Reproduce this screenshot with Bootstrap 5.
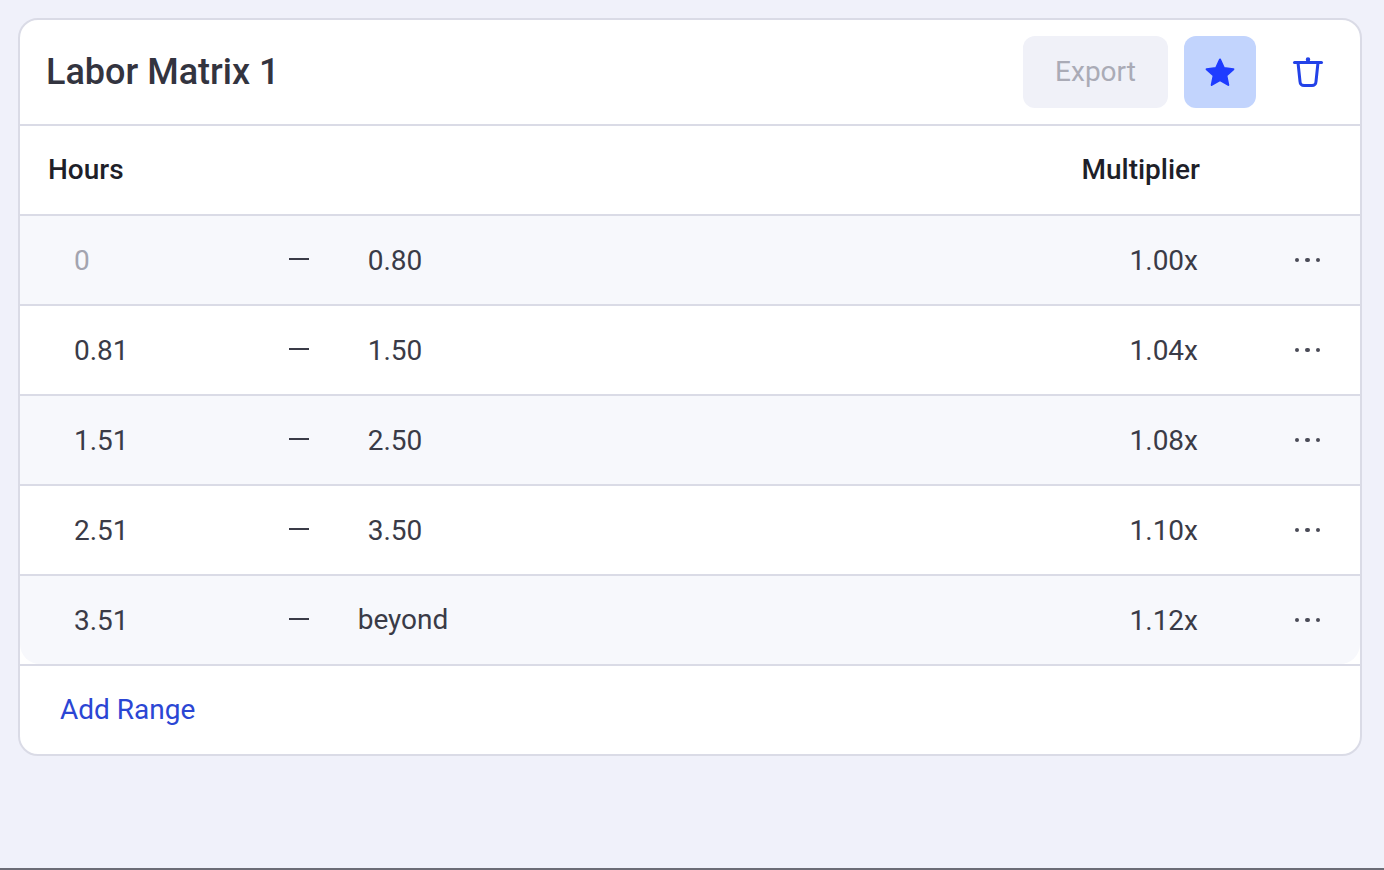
<!DOCTYPE html>
<html lang="en">
<head>
  <meta charset="UTF-8" />
  <meta name="viewport" content="width=device-width, initial-scale=1.0" />
  <title>Labor Matrix</title>
  <link rel="stylesheet" href="https://cdn.jsdelivr.net/npm/bootstrap@5.3.3/dist/css/bootstrap.min.css" />
  <style>
    html, body {
      height: 100%;
    }
    body {
      font-family: Roboto, "Liberation Sans", sans-serif;
      background-color: #f0f1fa;
      color: #3a3b47;
      font-size: 28px;
      line-height: 40px;
      overflow: hidden;
    }
    .page-wrap {
      height: 870px;
      padding: 18px 22px 0 18px;
      border-bottom: 2px solid #6b6c76;
    }
    .matrix-card {
      background: #fff;
      border: 2px solid #dadbe6;
      border-radius: 20px;
      overflow: hidden;
    }
    .matrix-head {
      height: 106px;
      padding: 0 16px 0 26px;
      border-bottom: 2px solid #dadbe6;
    }
    .matrix-title {
      font-size: 36px;
      font-weight: 500;
      line-height: 44px;
      margin: 0;
      color: #33343f;
    }
    .btn-export {
      width: 145px;
      height: 72px;
      padding: 0;
      font-size: 28px;
      color: #aaabb6;
      background: #f0f1f8;
      border: 0;
      border-radius: 12px;
    }
    .btn-star {
      width: 72px;
      height: 72px;
      background: #c2d4fd;
      border: 0;
      border-radius: 12px;
    }
    .btn-trash {
      width: 72px;
      height: 72px;
      background: transparent;
      border: 0;
    }
    .matrix-labels {
      height: 90px;
      padding: 0 160px 0 28px;
      font-weight: 500;
      color: #1e1f29;
      border-bottom: 2px solid #dadbe6;
    }
    .matrix-row {
      height: 90px;
      padding-top: 2px;
      border-bottom: 2px solid #dadbe6;
    }
    .matrix-row:nth-child(odd) {
      background: #f7f8fc;
    }
    .matrix-rows {
      border-bottom: 2px solid #dadbe6;
    }
    .matrix-rows .matrix-row:last-child {
      border-bottom: 0;
      height: 88px;
      border-bottom-left-radius: 20px;
      border-bottom-right-radius: 20px;
    }
    .cell-from {
      width: 269px;
      padding-left: 54px;
    }
    .cell-from.is-fixed {
      color: #a3a4af;
    }
    .cell-dash {
      width: 20px;
      height: 2px;
      background: #3a3b47;
      margin-top: -4px;
    }
    .cell-to {
      width: 172px;
      text-align: center;
    }
    .cell-to.is-open {
      padding-left: 16px;
      margin-top: -2px;
    }
    .cell-mult {
      margin-left: auto;
      width: 120px;
      text-align: right;
    }
    .cell-more {
      width: 162px;
      padding-left: 97px;
      display: flex;
      gap: 6px;
      margin-top: -2px;
    }
    .cell-more span {
      width: 4.4px;
      height: 4.4px;
      border-radius: 50%;
      background: #4a4b57;
    }
    .matrix-foot {
      height: 88px;
      padding-left: 40px;
    }
    .add-range {
      color: #2b46d4;
      text-decoration: none;
    }
  </style>
</head>
<body>

  <div class="page-wrap">
    <div class="matrix-card">
      <div class="matrix-head d-flex align-items-center">
        <h1 class="matrix-title">Labor Matrix 1</h1>
        <div class="d-flex align-items-center gap-3 ms-auto">
          <button class="btn-export" type="button">Export</button>
          <button class="btn-star d-flex align-items-center justify-content-center" type="button" aria-label="Favorite">
            <svg width="32" height="30" viewBox="0 0 32 30"><path d="M16 2.500l4 8.600 9.400 1.100-7 6.400 1.900 9.300-8.300-4.700-8.300 4.700 1.900-9.300-7-6.400 9.400-1.100z" fill="#1f3cff" stroke="#1f3cff" stroke-width="2" stroke-linejoin="round"/></svg>
          </button>
          <button class="btn-trash d-flex align-items-center justify-content-center" type="button" aria-label="Delete">
            <svg width="32" height="32" viewBox="0 0 32 32" fill="none" stroke="#2342e8" stroke-width="3" stroke-linecap="round" stroke-linejoin="round"><path d="M2.500 6.500h27"/><path d="M6 6.500l2 19a4 4 0 0 0 4 4h8a4 4 0 0 0 4-4l2-19"/><circle cx="16" cy="3.500" r="1.500" fill="#2342e8" stroke-width="1.500"/></svg>
          </button>
        </div>
      </div>

      <div class="matrix-labels d-flex align-items-center justify-content-between">
        <span>Hours</span>
        <span>Multiplier</span>
      </div>

      <div class="matrix-rows" id="matrix-rows"></div>

      <div class="matrix-foot d-flex align-items-center">
        <a class="add-range" href="#">Add Range</a>
      </div>
    </div>
  </div>

  <script>
    const ranges = [
      { from: "0", to: "0.80", mult: "1.00x" },
      { from: "0.81", to: "1.50", mult: "1.04x" },
      { from: "1.51", to: "2.50", mult: "1.08x" },
      { from: "2.51", to: "3.50", mult: "1.10x" },
      { from: "3.51", to: "beyond", mult: "1.12x" }
    ];

    const rows = document.getElementById("matrix-rows");
    ranges.forEach((r, i) => {
      const div = document.createElement("div");
      div.className = "matrix-row d-flex align-items-center";
      div.innerHTML = `
        <div class="cell-from ${i === 0 ? "is-fixed" : ""}">${r.from}</div>
        <div class="cell-dash"></div>
        <div class="cell-to ${r.to === "beyond" ? "is-open" : ""}">${r.to}</div>
        <div class="cell-mult">${r.mult}</div>
        <div class="cell-more"><span></span><span></span><span></span></div>
      `;
      rows.appendChild(div);
    });
  </script>
  <script src="https://cdn.jsdelivr.net/npm/bootstrap@5.3.3/dist/js/bootstrap.bundle.min.js"></script>
</body>
</html>
